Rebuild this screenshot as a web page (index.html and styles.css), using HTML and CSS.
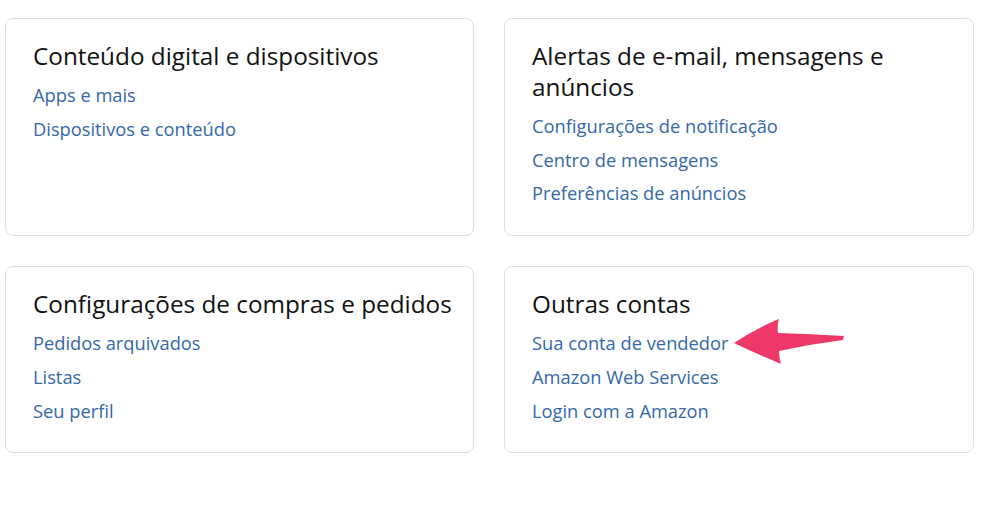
FILE: index.html
```html
<!DOCTYPE html>
<html lang="pt-BR">
<head>
    <meta charset="UTF-8">
    <meta name="viewport" content="width=device-width, initial-scale=1.0">
    <title>Sua conta</title>
    <link rel="stylesheet" href="styles.css">
</head>
<body>
    <div class="grid">
        <div class="card">
            <h2 class="card-title">Conteúdo digital e dispositivos</h2>
            <ul class="links">
                <li><a href="#">Apps e mais</a></li>
                <li><a href="#">Dispositivos e conteúdo</a></li>
            </ul>
        </div>
        <div class="card">
            <h2 class="card-title">Alertas de e-mail, mensagens e anúncios</h2>
            <ul class="links">
                <li><a href="#">Configurações de notificação</a></li>
                <li><a href="#">Centro de mensagens</a></li>
                <li><a href="#">Preferências de anúncios</a></li>
            </ul>
        </div>
        <div class="card">
            <h2 class="card-title">Configurações de compras e pedidos</h2>
            <ul class="links">
                <li><a href="#">Pedidos arquivados</a></li>
                <li><a href="#">Listas</a></li>
                <li><a href="#">Seu perfil</a></li>
            </ul>
        </div>
        <div class="card">
            <h2 class="card-title">Outras contas</h2>
            <ul class="links">
                <li><a href="#">Sua conta de vendedor</a></li>
                <li><a href="#">Amazon Web Services</a></li>
                <li><a href="#">Login com a Amazon</a></li>
            </ul>
            <svg class="arrow" width="120" height="52" viewBox="0 0 120 52">
                <path d="M3 27 Q26 12 48 3 Q46 10 47 17 Q80 18 113 20 L112 24 Q80 28 48 35 Q48 42 50 48 Q26 38 3 27 Z" fill="#ee3868"/>
            </svg>
        </div>
    </div>
</body>
</html>
```
FILE: styles.css
```css
body {
    margin: 0;
    padding: 0;
    background: #fff;
    font-family: "Open Sans", "Noto Sans", Arial, sans-serif;
}
.grid {
    display: grid;
    grid-template-columns: 469px 470px;
    column-gap: 30px;
    row-gap: 30px;
    padding: 18px 0 0 5px;
}
.card {
    position: relative;
    border: 1px solid #ddd;
    border-radius: 8px;
    padding: 21px 20px 25px 27px;
}
.card-title {
    margin: 0 0 7px 0;
    font-size: 24.3px;
    font-weight: normal;
    line-height: 31px;
    color: #111;
}
.links {
    list-style: none;
    margin: 0;
    padding: 0;
}
.links li {
    line-height: 33.7px;
    font-size: 18.3px;
}
.links a {
    color: #3468a8;
    text-decoration: none;
}
.arrow {
    position: absolute;
    left: 226px;
    top: 49px;
}
```
